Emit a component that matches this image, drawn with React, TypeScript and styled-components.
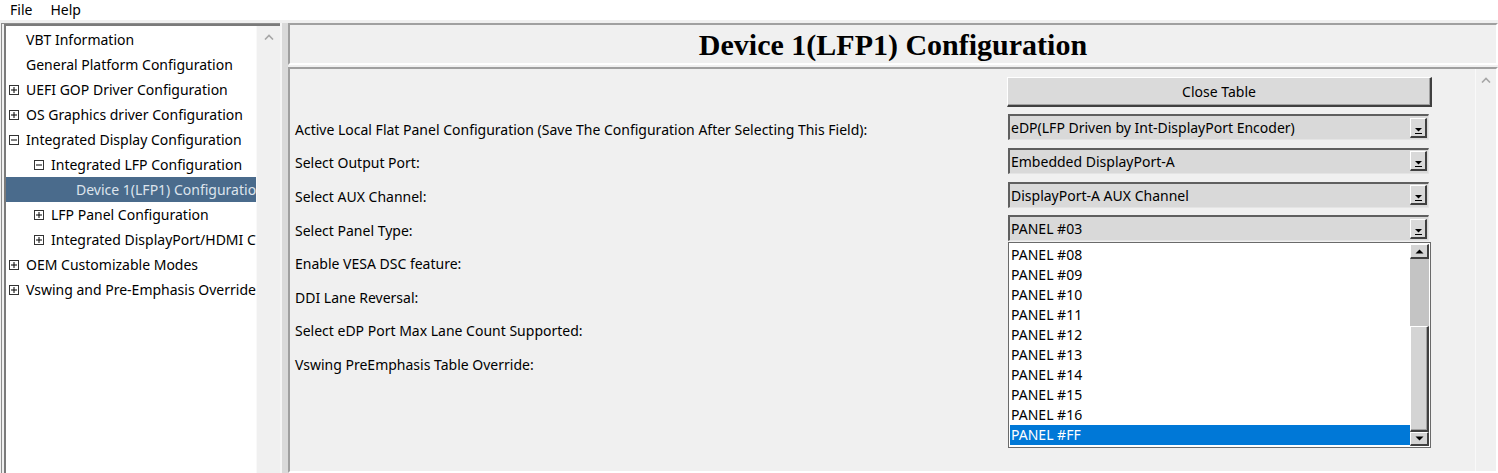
import React from 'react';
import styled, { createGlobalStyle, css } from 'styled-components';

const GlobalStyle = createGlobalStyle`
  html, body { margin: 0; padding: 0; }
  body {
    background: #f0f0f0;
    font-family: "Noto Sans", "Open Sans", sans-serif;
    font-size: 14px;
    color: #000;
    overflow: hidden;
  }
`;

type TreeNode = { label: string; level: number; exp: 'plus' | 'minus' | null; selected?: boolean };

const treeItems: TreeNode[] = [
  { label: 'VBT Information', level: 0, exp: null },
  { label: 'General Platform Configuration', level: 0, exp: null },
  { label: 'UEFI GOP Driver Configuration', level: 0, exp: 'plus' },
  { label: 'OS Graphics driver Configuration', level: 0, exp: 'plus' },
  { label: 'Integrated Display Configuration', level: 0, exp: 'minus' },
  { label: 'Integrated LFP Configuration', level: 1, exp: 'minus' },
  { label: 'Device 1(LFP1) Configuration', level: 2, exp: null, selected: true },
  { label: 'LFP Panel Configuration', level: 1, exp: 'plus' },
  { label: 'Integrated DisplayPort/HDMI Configuration', level: 1, exp: 'plus' },
  { label: 'OEM Customizable Modes', level: 0, exp: 'plus' },
  { label: 'Vswing and Pre-Emphasis Override', level: 0, exp: 'plus' },
];

type Field = { label: string; value?: string; open?: boolean };

const fields: Field[] = [
  { label: 'Active Local Flat Panel Configuration (Save The Configuration After Selecting This Field):', value: 'eDP(LFP Driven by Int-DisplayPort Encoder)' },
  { label: 'Select Output Port:', value: 'Embedded DisplayPort-A' },
  { label: 'Select AUX Channel:', value: 'DisplayPort-A AUX Channel' },
  { label: 'Select Panel Type:', value: 'PANEL #03', open: true },
  { label: 'Enable VESA DSC feature:' },
  { label: 'DDI Lane Reversal:' },
  { label: 'Select eDP Port Max Lane Count Supported:' },
  { label: 'Vswing PreEmphasis Table Override:' },
];

const panelOptions = [
  'PANEL #01', 'PANEL #02', 'PANEL #03', 'PANEL #04', 'PANEL #05', 'PANEL #06', 'PANEL #07',
  'PANEL #08', 'PANEL #09', 'PANEL #10', 'PANEL #11', 'PANEL #12', 'PANEL #13', 'PANEL #14',
  'PANEL #15', 'PANEL #16', 'PANEL #FF',
];
const visibleOptions = panelOptions.slice(7);

/* ---------- window frame ---------- */

const Window = styled.div`
  width: 1498px;
  height: 473px;
  display: flex;
  flex-direction: column;
  overflow: hidden;
`;

const MenuBar = styled.div`
  height: 20px;
  flex: none;
  background: #fff;
  display: flex;
  align-items: center;
  padding-left: 1px;
`;

const MenuItem = styled.span`
  padding: 0 9px;
  line-height: 20px;
`;

const Body = styled.div`
  flex: 1;
  min-height: 0;
  display: flex;
  padding-top: 3px;
`;

/* ---------- tree ---------- */

const TreePane = styled.div`
  flex: none;
  display: flex;
  margin-left: 1px;
  border-top: 1px solid #8c8c8c;
  border-left: 1px solid #8c8c8c;
  padding: 0 0 0 2px;
`;

const TreeBox = styled.div`
  display: flex;
  border-top: 2px solid #7a7a7a;
  border-left: 2px solid #7a7a7a;
`;

const TreeList = styled.div`
  width: 250px;
  background: #fff;
  padding-top: 1px;
  overflow: hidden;
`;

const TreeRow = styled.div<{ $level: number; $selected?: boolean }>`
  height: 25px;
  display: flex;
  align-items: center;
  padding-left: ${(p) => 3 + p.$level * 25}px;
  white-space: nowrap;
  overflow: hidden;
  background: ${(p) => (p.$selected ? '#4a6b8c' : 'transparent')};
  color: ${(p) => (p.$selected ? '#dde4ec' : '#000')};
`;

const ExpanderSlot = styled.span`
  width: 10px;
  height: 10px;
  flex: none;
  margin-right: 7px;
  display: inline-flex;
`;

const TreeLabel = styled.span`
  line-height: 25px;
`;

const ScrollBar = styled.div<{ $width: number }>`
  width: ${(p) => p.$width}px;
  flex: none;
  background: #f0f0f0;
  border-left: 1px solid #f9f9f9;
  display: flex;
  flex-direction: column;
`;

const ScrollUp = styled.div`
  height: 22px;
  display: flex;
  align-items: center;
  justify-content: center;
`;

const Splitter = styled.div`
  width: 6px;
  flex: none;
  border-left: 2px solid #f6f6f6;
  background: #dadada;
`;

/* ---------- right side ---------- */

const RightPane = styled.div`
  flex: 1;
  min-width: 0;
  display: flex;
  flex-direction: column;
`;

const sunken = css`
  border-style: solid;
  border-width: 2px;
  border-color: #a0a0a0 #fff #fff #a0a0a0;
`;

const HeaderBox = styled.div`
  ${sunken};
  height: 42px;
  box-sizing: border-box;
  flex: none;
  display: flex;
  justify-content: center;
`;

const Title = styled.h1`
  margin: 0;
  padding-top: 1px;
  font-family: "Liberation Serif", "Times New Roman", serif;
  font-weight: bold;
  font-size: 30px;
  line-height: 37px;
`;

const ContentBox = styled.div`
  ${sunken};
  margin-top: 2px;
  flex: 1;
  min-height: 0;
  display: flex;
`;

const Form = styled.div`
  flex: 1;
  min-width: 0;
  padding: 8px 43px 0 5px;
  display: grid;
  grid-template-columns: 1fr 425px;
  grid-auto-rows: 33.6px;
  align-content: start;
`;

const raised = css`
  border-style: solid;
  border-width: 1px 2px 2px 1px;
  border-color: #fff #404040 #404040 #fff;
`;

const ButtonRow = styled.div`
  grid-column: 1 / span 2;
  display: grid;
  grid-template-columns: 1fr 425px;
  height: 37px;
`;

const CloseButton = styled.button`
  ${raised};
  grid-column: 2;
  height: 30px;
  align-self: start;
  background: #dadada;
  font-family: "Noto Sans", sans-serif;
  font-size: 14px;
  color: #000;
  padding: 0;
  box-shadow: inset -1px -1px 0 #a0a0a0;
`;

const FieldLabel = styled.div`
  grid-column: 1;
  display: flex;
  align-items: center;
  padding-top: 4px;
  white-space: nowrap;
`;

const FieldControl = styled.div`
  grid-column: 2;
  display: flex;
  align-items: center;
  position: relative;
`;

const Select = styled.div`
  position: relative;
  margin-left: 1px;
  width: 421px;
  height: 26px;
  box-sizing: border-box;
  border-style: solid;
  border-width: 2px 1px 1px 2px;
  border-color: #5f5f5f #e4e4e4 #e4e4e4 #5f5f5f;
  background: #d9d9d9;
  display: flex;
  align-items: center;
`;

const SelectValue = styled.span`
  flex: 1;
  padding-left: 1px;
  white-space: nowrap;
  overflow: hidden;
`;

const ComboButton = styled.div`
  ${raised};
  width: 14px;
  height: 15px;
  margin-right: 1px;
  background: #d9d9d9;
  display: flex;
  align-items: flex-end;
  justify-content: center;
  padding-bottom: 2px;
  box-sizing: content-box;
`;

const DropList = styled.div`
  position: absolute;
  top: calc(100% + 2px);
  left: -2px;
  width: 423px;
  height: 206px;
  box-sizing: border-box;
  border: 1px solid #6a6a6a;
  padding: 2px 1px 1px;
  background: #fff;
  display: flex;
  z-index: 5;
`;

const DropItems = styled.div`
  flex: 1;
  min-width: 0;
`;

const DropItem = styled.div<{ $selected?: boolean }>`
  height: 20px;
  line-height: 20px;
  padding-left: 1px;
  white-space: nowrap;
  background: ${(p) => (p.$selected ? '#0078d7' : 'transparent')};
  color: ${(p) => (p.$selected ? '#fff' : '#000')};
`;

const ListScroll = styled.div`
  width: 19px;
  flex: none;
  display: flex;
  flex-direction: column;
  background: #c4c4c4;
  margin-top: -1px;
`;

const ArrowButton = styled.div<{ $h: number }>`
  ${raised};
  height: ${(p) => p.$h}px;
  box-sizing: border-box;
  background: #d4d4d4;
  display: flex;
  align-items: center;
  justify-content: center;
  flex: none;
`;

const Track = styled.div`
  flex: 1;
  display: flex;
  flex-direction: column;
  justify-content: flex-end;
`;

const Thumb = styled.div`
  ${raised};
  box-sizing: border-box;
  background: #d4d4d4;
  box-shadow: inset -1px -1px 0 #a0a0a0;
`;

/* ---------- icons ---------- */

const Expander = ({ kind }: { kind: 'plus' | 'minus' }) => (
  <svg width="10" height="10" viewBox="0 0 10 10">
    <rect x="0.5" y="0.5" width="9" height="9" fill="#fff" stroke="#333" />
    <line x1="2" y1="5" x2="8" y2="5" stroke="#000" />
    {kind === 'plus' && <line x1="5" y1="2" x2="5" y2="8" stroke="#000" />}
  </svg>
);

const Chevron = () => (
  <svg width="10" height="6" viewBox="0 0 10 6">
    <polyline points="1,5.5 5,1.5 9,5.5" fill="none" stroke="#a6a6a6" strokeWidth="1.6" />
  </svg>
);

const Triangle = ({ up }: { up?: boolean }) => (
  <svg width="9" height="5" viewBox="0 0 9 5">
    <polygon points={up ? '0.5,4.5 4.5,0.5 8.5,4.5' : '0.5,0.5 8.5,0.5 4.5,4.5'} fill="#000" />
  </svg>
);

const ComboArrow = () => (
  <svg width="7" height="6" viewBox="0 0 7 6">
    <polygon points="0,0 7,0 3.5,3.5" fill="#000" />
    <rect x="0" y="5" width="7" height="1" fill="#000" />
  </svg>
);

/* ---------- app ---------- */

const TRACK_TOTAL = 171;
const thumbHeight = Math.round((TRACK_TOTAL * visibleOptions.length) / panelOptions.length) + 5;

export default function App() {
  return (
    <>
      <GlobalStyle />
      <Window>
        <MenuBar>
          <MenuItem>File</MenuItem>
          <MenuItem>Help</MenuItem>
        </MenuBar>
        <Body>
          <TreePane>
            <TreeBox>
              <TreeList>
                {treeItems.map((n) => (
                  <TreeRow key={n.label} $level={n.level} $selected={n.selected}>
                    <ExpanderSlot>{n.exp && <Expander kind={n.exp} />}</ExpanderSlot>
                    <TreeLabel>{n.label}</TreeLabel>
                  </TreeRow>
                ))}
              </TreeList>
              <ScrollBar $width={23}>
                <ScrollUp>
                  <Chevron />
                </ScrollUp>
              </ScrollBar>
            </TreeBox>
          </TreePane>
          <Splitter />
          <RightPane>
            <HeaderBox>
              <Title>Device 1(LFP1) Configuration</Title>
            </HeaderBox>
            <ContentBox>
              <Form>
                <ButtonRow>
                  <CloseButton>Close Table</CloseButton>
                </ButtonRow>
                {fields.map((f) => (
                  <React.Fragment key={f.label}>
                    <FieldLabel>{f.label}</FieldLabel>
                    <FieldControl>
                      {f.value && (
                        <Select>
                          <SelectValue>{f.value}</SelectValue>
                          <ComboButton>
                            <ComboArrow />
                          </ComboButton>
                          {f.open && (
                            <DropList>
                              <DropItems>
                                {visibleOptions.map((o) => (
                                  <DropItem key={o} $selected={o === 'PANEL #FF'}>
                                    {o}
                                  </DropItem>
                                ))}
                              </DropItems>
                              <ListScroll>
                                <ArrowButton $h={15}>
                                  <Triangle up />
                                </ArrowButton>
                                <Track>
                                  <Thumb style={{ height: thumbHeight }} />
                                </Track>
                                <ArrowButton $h={14}>
                                  <Triangle />
                                </ArrowButton>
                              </ListScroll>
                            </DropList>
                          )}
                        </Select>
                      )}
                    </FieldControl>
                  </React.Fragment>
                ))}
              </Form>
              <ScrollBar $width={20}>
                <ScrollUp>
                  <Chevron />
                </ScrollUp>
              </ScrollBar>
            </ContentBox>
          </RightPane>
        </Body>
      </Window>
    </>
  );
}
